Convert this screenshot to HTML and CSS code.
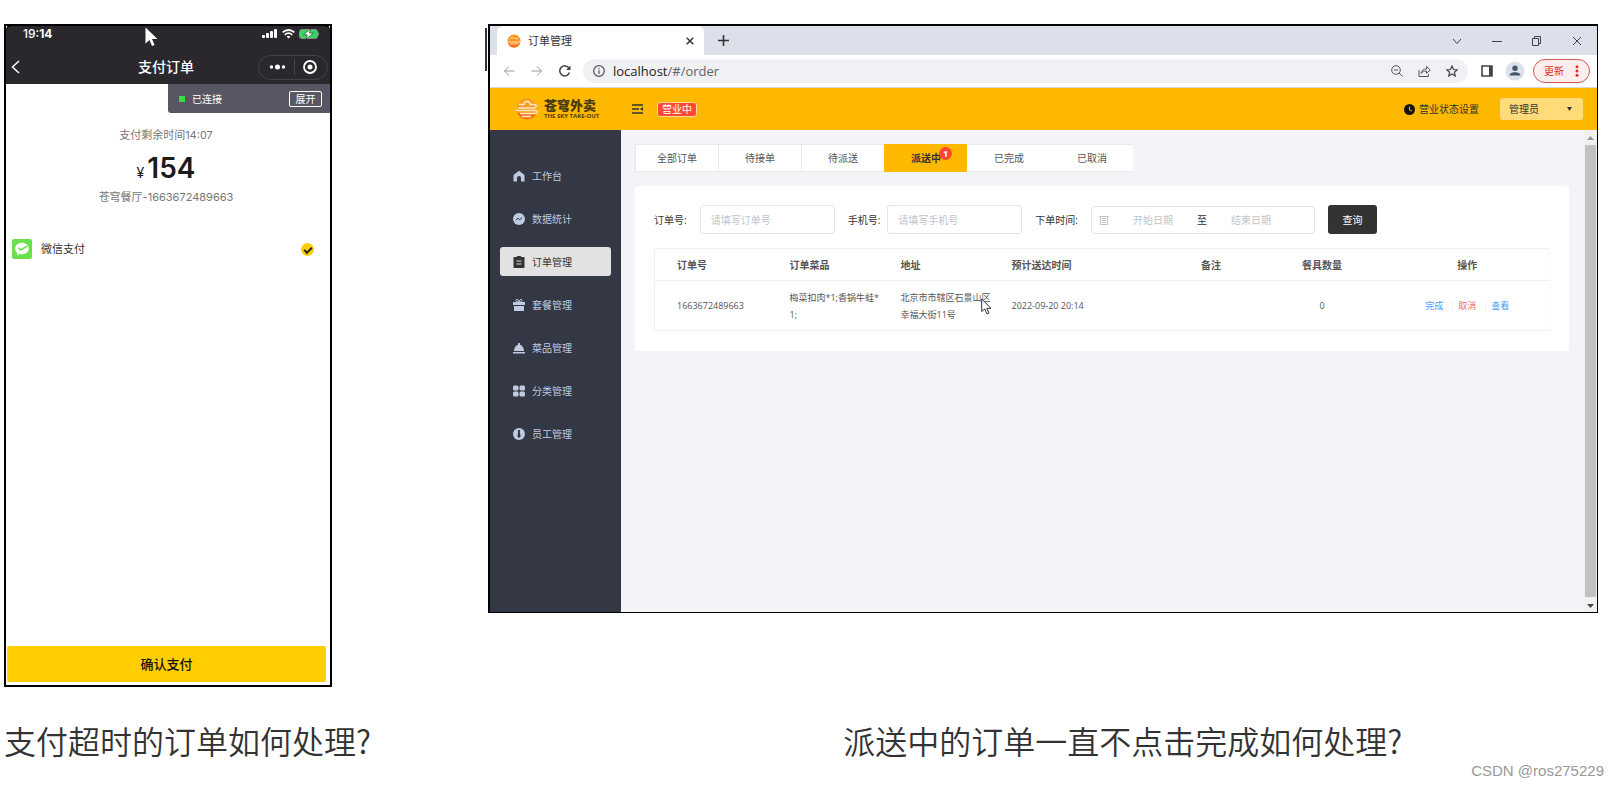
FILE: index.html
```
<!DOCTYPE html>
<html lang="zh-CN">
<head>
    <meta charset="UTF-8">
    <meta name="viewport" content="width=device-width, initial-scale=1.0">
    <title>订单管理</title>
    <link rel="stylesheet" href="styles.css">
</head>
<body>
    <main class="board">
        <!-- Mini program payment page -->
        <section class="phone">
            <div class="phone-top">
                <div class="status-bar">
                    <span class="clock">19:<b>14</b></span>
                    <span class="status-icons">
                        <svg width="16" height="9" viewBox="0 0 16 9" fill="#fff"><rect x="0" y="6" width="3" height="3" rx="1"/><rect x="4" y="4" width="3" height="5" rx="1"/><rect x="8" y="2" width="3" height="7" rx="1"/><rect x="12" y="0" width="3" height="9" rx="1"/></svg>
                        <svg width="13" height="10" viewBox="0 0 13 10" fill="none" stroke="#fff" stroke-width="1.8"><path d="M.7 3.4C4 .2 9 .2 12.300 3.400M2.800 5.800C5 3.800 8 3.800 10.200 5.800"/><path d="M4.600 7.500 6.500 9.600 8.400 7.500C7.300 6.600 5.700 6.600 4.600 7.500z" fill="#fff" stroke="none"/></svg>
                        <svg width="21" height="10" viewBox="0 0 21 10"><rect x=".5" y=".5" width="18" height="9" rx="2.500" fill="#35d65c" stroke="#8d8d90"/><path d="M19.500 3.500v3" stroke="#8d8d90"/><path d="M11.500 0 4.500 5.800h3.800L7 10 14.500 4.100h-4.100z" fill="#fff" stroke="#2a282d" stroke-width=".6"/></svg>
                    </span>
                </div>
                <div class="nav-bar">
                    <button class="back" aria-label="返回"><svg width="9" height="14" viewBox="0 0 9 14" fill="none" stroke="#fff" stroke-width="1.500"><path d="M8 1 1.500 7 8 13"/></svg></button>
                    <h1>支付订单</h1>
                    <div class="capsule">
                        <svg width="17" height="6" viewBox="0 0 17 6" fill="#fff"><circle cx="2.500" cy="3" r="1.700"/><circle cx="8.500" cy="3" r="2.500"/><circle cx="14.500" cy="3" r="1.700"/></svg>
                        <i></i>
                        <svg width="14" height="14" viewBox="0 0 14 14"><circle cx="7" cy="7" r="6" fill="none" stroke="#fff" stroke-width="1.800"/><circle cx="7" cy="7" r="2.500" fill="#fff"/></svg>
                    </div>
                </div>
                <svg class="phone-pointer" width="13" height="20" viewBox="0 0 13 20"><path d="M.5.5v16l4-3.500 2.500 6 2.500-1-2.500-6h5.500z" fill="#fff"/></svg>
            </div>
            <div class="debug-bar">
                <i></i><span>已连接</span><button>展开</button>
            </div>
            <div class="pay-info">
                <p>支付剩余时间14:07</p>
                <p class="amount"><small>¥</small>154</p>
                <p>苍穹餐厅-1663672489663</p>
            </div>
            <label class="pay-method">
                <svg width="20" height="20" viewBox="0 0 20 20"><rect width="20" height="20" rx="2" fill="#6ae04d"/><path d="M10 3.800c4 0 6.800 2.500 6.800 5.700s-2.800 5.800-6.800 5.800c-.8 0-1.700-.1-2.400-.3L5 16.400l.5-2.300c-1.500-1.100-2.300-2.700-2.300-4.600 0-3.200 2.800-5.700 6.800-5.700z" fill="#fff"/><path d="M6.500 8.800 8.700 11 15.500 6.800" fill="none" stroke="#6ae04d" stroke-width="1.500"/></svg>
                <span>微信支付</span>
                <input type="radio" name="pay" checked>
            </label>
            <button class="confirm">确认支付</button>
        </section>

        <!-- Admin page in a browser window -->
        <section class="browser">
            <div class="tab-strip">
                <div class="browser-tab">
                    <svg width="14" height="14" viewBox="0 0 14 14"><circle cx="7" cy="7" r="6.500" fill="#ff9420"/><path d="M1 9.500h12A6.500 6.500 0 0 1 1 9.500z" fill="#ff6b16"/><path d="M3 5.500c0-2 3-2 3.500-1.500s4 0 4.500 1.500M1 8h12M3 10h8" fill="none" stroke="#ffe3b5"/></svg>
                    <span>订单管理</span>
                    <svg width="8" height="8" viewBox="0 0 8 8" stroke="#333" stroke-width="1.500"><path d="m.7.7 6.600 6.600M7.300.7.7 7.300"/></svg>
                </div>
                <svg class="new-tab" width="11" height="11" viewBox="0 0 11 11" stroke="#333" stroke-width="1.600"><path d="M5.500 0v11M0 5.500h11"/></svg>
                <div class="window-controls">
                    <svg width="10" height="10" viewBox="0 0 10 10"><path d="m1 3 4 4.500L9 3"/></svg>
                    <svg width="10" height="10" viewBox="0 0 10 10"><path d="M0 5.500h10"/></svg>
                    <svg width="10" height="10" viewBox="0 0 10 10"><path d="M.5 2.500h6v7h-6zM2.500 2.500v-2h6v7h-2"/></svg>
                    <svg width="10" height="10" viewBox="0 0 10 10"><path d="m1 1 8 8M9 1 1 9"/></svg>
                </div>
            </div>

            <div class="toolbar">
                <svg width="12" height="12" viewBox="0 0 12 12" stroke="#999"><path d="M11.500 6H1.500M6 1.500 1.500 6 6 10.500"/></svg>
                <svg width="12" height="12" viewBox="0 0 12 12" stroke="#999"><path d="M.5 6h10M6 1.500 10.500 6 6 10.500"/></svg>
                <svg width="12" height="12" viewBox="0 0 12 12" stroke="#444" stroke-width="1.500"><path d="M10.500 7.500A5 5 0 1 1 10 3.200"/><path d="M11.500.5v4.500H7z" fill="#444" stroke="none"/></svg>
                <div class="omnibox">
                    <svg width="12" height="12" viewBox="0 0 12 12" stroke="#555" stroke-width="1.200"><circle cx="6" cy="6" r="5.300"/><path d="M6 5.300V9M6 3v1.300"/></svg>
                    <span class="url"><b>localhost</b>/#/order</span>
                    <svg width="12" height="12" viewBox="0 0 12 12" stroke="#555"><circle cx="5" cy="5" r="4.300"/><path d="m8 8 3.500 3.500M3 5h4"/></svg>
                    <svg width="13" height="12" viewBox="0 0 13 12" stroke="#555"><path d="M1 5v6.500h9.500V9M3 8.500c.5-3 2.500-4.500 5.500-4.500V1.500L12.300 5 8.500 8.300V6C6 6 4.500 6.500 3 8.500z"/></svg>
                    <svg width="12" height="12" viewBox="0 0 12 12" stroke="#444" stroke-width="1.200"><path d="M6 1 7.500 4.500l3.800.3-2.900 2.500.9 3.700L6 9l-3.300 2 .9-3.700L.7 4.800l3.800-.3z"/></svg>
                </div>
                <svg width="12" height="12" viewBox="0 0 12 12"><path d="M1 1h10v10H1z" stroke="#444" stroke-width="1.600"/><path d="M8 1h3v10H8z" fill="#444"/></svg>
                <svg width="20" height="20" viewBox="0 0 20 20"><circle cx="10" cy="10" r="9.500" fill="#dce1ea"/><circle cx="10" cy="7.200" r="2.700" fill="#45566b"/><path d="M4.500 14.500c0-4.500 11-4.500 11 0z" fill="#45566b"/></svg>
                <button class="update">更新 <svg width="4" height="12" viewBox="0 0 4 12" fill="#d93025"><circle cx="2" cy="1.800" r="1.500"/><circle cx="2" cy="6" r="1.500"/><circle cx="2" cy="10.200" r="1.500"/></svg></button>
            </div>

            <header class="app-header">
                <div class="brand">
                    <svg width="24" height="22" viewBox="0 0 24 22"><circle cx="12" cy="11" r="10.500" fill="#ff9a1c"/><path d="M2.500 15h19A10.500 10.500 0 0 1 2.500 15z" fill="#ff6a12"/><path d="M4 6.500h5c0-4 6-4 6 0h4c3 0 3 3.500 0 3.500H3M1 11.500c2 2 4 1 6 1h14M5 15.500h15c3 0 3-3 1-3M7 18.500h9" fill="none" stroke="#ffeccb" stroke-width="1.300"/></svg>
                    <div><strong>苍穹外卖</strong><small>THE SKY TAKE-OUT</small></div>
                </div>
                <svg class="fold" width="11" height="10" viewBox="0 0 11 10" stroke="#333" stroke-width="1.400"><path d="M0 1h11M0 5h7M0 9h11"/><path d="m11 3-3 2 3 2z" fill="#333" stroke="none"/></svg>
                <span class="open-tag">营业中</span>
                <button class="shop-state"><svg width="11" height="11" viewBox="0 0 11 11"><circle cx="5.500" cy="5.500" r="5.500" fill="#181408"/><path d="M5.500 2.500v3.500L8 7" fill="none" stroke="#ffb800"/></svg>营业状态设置</button>
                <div class="account">
                    <select aria-label="账号"><option>管理员</option></select>
                    <svg width="5" height="4" viewBox="0 0 5 4"><path d="M0 0h5L2.500 4z" fill="#333"/></svg>
                </div>
            </header>

            <div class="app-body">
                <nav class="sidebar">
                    <a href="#"><svg viewBox="0 0 12 12"><path d="M6 .8 11.500 5v6.500H8V8a2 2 0 0 0-4 0v3.500H.5V5z"/></svg>工作台</a>
                    <a href="#"><svg viewBox="0 0 12 12"><circle cx="6" cy="6" r="6"/><path d="m3 7.300 2-2.300 1.700 1.800L9 4.700" fill="none" stroke="#343744"/></svg>数据统计</a>
                    <a href="#" class="active"><svg viewBox="0 0 12 12"><path d="M.5 1h11v11H.5z"/><path d="M4 0h4v2H4z"/><path d="M3.500 5h5M3.500 8h5" stroke="#e2e2e2"/></svg>订单管理</a>
                    <a href="#"><svg viewBox="0 0 12 12"><path d="M0 3h12v3H0zM1 7h10v5H1z"/><path d="M6 3C2 3 2 .5 4 .5S6 3 6 3s0-2.500 2-2.500S10 3 6 3z" fill="none" stroke="#bfcbe0"/></svg>套餐管理</a>
                    <a href="#"><svg viewBox="0 0 12 12"><path d="M.8 9C1.200 5 3.500 3 5 2.700V1h2v1.700C8.500 3 10.800 5 11.200 9zM0 10h12v1.500H0z"/></svg>菜品管理</a>
                    <a href="#"><svg viewBox="0 0 12 12"><rect y=".5" width="5.500" height="5" rx="1.500"/><rect x="6.500" y=".5" width="5.500" height="5" rx="1.500"/><rect y="6.500" width="5.500" height="5" rx="1.500"/><rect x="6.500" y="6.500" width="5.500" height="5" rx="1.500"/></svg>分类管理</a>
                    <a href="#"><svg viewBox="0 0 12 12"><circle cx="6" cy="6" r="6"/><path d="M4.800 2h2.400L6.800 4l.8 4.500L6 10 4.400 8.500 5.200 4z" fill="#343744"/></svg>员工管理</a>
                </nav>

                <div class="content">
                    <div class="order-tabs">
                        <button>全部订单</button>
                        <button>待接单</button>
                        <button>待派送</button>
                        <button class="active">派送中<span class="badge">1</span></button>
                        <button>已完成</button>
                        <button>已取消</button>
                    </div>

                    <div class="card">
                        <form class="filters">
                            <label for="order-no">订单号:</label>
                            <input id="order-no" class="field" type="text" placeholder="请填写订单号">
                            <label for="phone-no">手机号:</label>
                            <input id="phone-no" class="field" type="text" placeholder="请填写手机号">
                            <label for="date-start">下单时间:</label>
                            <div class="date-range">
                                <svg width="10" height="10" viewBox="0 0 10 10" fill="none" stroke="#c0c4cc"><path d="M1.500 1v8.500h7V1M0 1.500h10M3 3.500h4M3 5.500h4M3 7.500h4"/></svg>
                                <input id="date-start" type="text" placeholder="开始日期">
                                <span>至</span>
                                <input type="text" placeholder="结束日期" aria-label="结束日期">
                            </div>
                            <button type="button" class="search">查询</button>
                        </form>

                        <table>
                            <thead>
                                <tr>
                                    <th class="col-no">订单号</th>
                                    <th class="col-dish">订单菜品</th>
                                    <th class="col-addr">地址</th>
                                    <th class="col-time">预计送达时间</th>
                                    <th class="col-note">备注</th>
                                    <th class="col-count">餐具数量</th>
                                    <th class="col-ops">操作</th>
                                </tr>
                            </thead>
                            <tbody>
                                <tr>
                                    <td class="col-no">1663672489663</td>
                                    <td>梅菜扣肉*1;香锅牛蛙*<br>1;</td>
                                    <td>北京市市辖区石景山区<br>幸福大街11号</td>
                                    <td>2022-09-20 20:14</td>
                                    <td></td>
                                    <td class="col-count">0</td>
                                    <td class="col-ops"><div class="ops"><a href="#">完成</a><a href="#" class="danger">取消</a><a href="#">查看</a></div></td>
                                </tr>
                            </tbody>
                        </table>
                        <svg class="table-pointer" width="11" height="17" viewBox="0 0 11 17"><path d="M.7 1v12.500L3.800 11l2.200 5 2-1-2.200-4.700h4.200z" fill="#fff" stroke="#333"/></svg>
                    </div>
                </div>

                <div class="scrollbar">
                    <svg width="7" height="4" viewBox="0 0 7 4"><path d="M3.500 0 7 4H0z" fill="#999"/></svg>
                    <i></i>
                    <svg width="7" height="4" viewBox="0 0 7 4"><path d="M0 0h7L3.500 4z" fill="#444"/></svg>
                </div>
            </div>
            <span class="caret"></span>
        </section>

        <h2 class="caption">支付超时的订单如何处理?</h2>
        <h2 class="caption caption-right">派送中的订单一直不点击完成如何处理?</h2>
    </main>
    <footer class="watermark">CSDN @ros275229</footer>
</body>
</html>
```
FILE: styles.css
```
:root {
    --yellow: #ffb800;
    --pay-yellow: #ffcd00;
    --dark: #2a282d;
    --sidebar: #343744;
    --sidebar-text: #bfcbe0;
    --line: #f0f1f3;
    --field-line: #e2e4e8;
    --placeholder: #c0c4cc;
}

* {
    margin: 0;
    padding: 0;
    box-sizing: border-box;
}

body {
    background: #fff;
    color: #333;
    font-family: "Open Sans", "Noto Sans CJK SC", sans-serif;
    font-size: 10px;
    line-height: 16px;
}

button,
input,
select {
    font: inherit;
    color: inherit;
    border: none;
    background: none;
}

a {
    color: inherit;
    text-decoration: none;
}

svg {
    display: block;
    flex-shrink: 0;
}

.board {
    display: grid;
    grid-template-columns: minmax(0, 328fr) minmax(0, 1110fr);
    gap: 31px 156px;
    align-items: start;
    padding: 24px 21px 0 4px;
}

/* Phone */
.phone {
    aspect-ratio: 328 / 663;
    display: flex;
    flex-direction: column;
    border: 2px solid #000;
    background: #fff;
    font-family: Inter, "Noto Sans CJK SC", sans-serif;
}

.phone-top {
    position: relative;
    background: var(--dark);
    color: #fff;
    border-radius: 6px 6px 0 0;
    box-shadow: 0 -2px 0 #000;
}

.status-bar {
    display: flex;
    justify-content: space-between;
    padding: 0 10px 0 17px;
    height: 15px;
}

.clock {
    font-size: 12px;
    font-weight: 500;
}

.status-icons {
    display: flex;
    align-items: center;
    gap: 4px;
}

.nav-bar {
    display: grid;
    grid-template-columns: 1fr auto 1fr;
    align-items: center;
    height: 43px;
    padding: 9px 2px 0;
}

.back {
    width: 9px;
    margin-left: 3px;
}

.nav-bar h1 {
    padding-right: 4px;
    font-size: 14px;
    font-weight: 500;
    line-height: 20px;
}

.capsule {
    justify-self: end;
    display: flex;
    align-items: center;
    justify-content: space-between;
    width: 70px;
    height: 25px;
    padding: 0 10px;
    border: 1px solid #444247;
    border-radius: 13px;
}

.capsule i {
    width: 1px;
    height: 16px;
    background: #48464b;
}

.phone-pointer {
    position: absolute;
    left: 43%;
    top: 1px;
}

.debug-bar {
    align-self: flex-end;
    display: flex;
    align-items: center;
    width: 50%;
    height: 29px;
    padding: 0 8px 0 11px;
    background: #595663;
    border-radius: 0 0 0 3px;
    color: #fff;
}

.debug-bar i {
    width: 6px;
    height: 6px;
    margin-right: 7px;
    background: #3ddc3d;
}

.debug-bar button {
    margin-left: auto;
    width: 33px;
    height: 16px;
    border: 1px solid #fff;
    border-radius: 2px;
    line-height: 14px;
}

.pay-info {
    padding: 12px 4px 0 0;
    text-align: center;
    color: #777;
    font-size: 11px;
    line-height: 20px;
}

.pay-info .amount {
    padding-top: 4px;
    color: #1b1b1b;
    font-size: 28px;
    font-weight: 600;
    line-height: 38px;
}

.amount small {
    margin-right: 3px;
    font-size: 14px;
    font-weight: 400;
    line-height: 14px;
}

.pay-method {
    display: flex;
    align-items: center;
    gap: 9px;
    margin-top: 32px;
    padding: 0 16px 0 6px;
    font-size: 11px;
}

.pay-method input {
    appearance: none;
    width: 13px;
    height: 13px;
    margin-left: auto;
    border-radius: 50%;
    background: var(--pay-yellow);
    display: grid;
    place-items: center;
}

.pay-method input::before {
    content: "";
    width: 6px;
    height: 3px;
    border-left: 2px solid #222;
    border-bottom: 2px solid #222;
    transform: rotate(-45deg);
}

.confirm {
    height: 36px;
    margin: auto 4px 3px 1px;
    border-radius: 2px;
    background: var(--pay-yellow);
    color: #111;
    font-size: 13px;
    font-weight: 500;
}

/* Browser window */
.browser {
    position: relative;
    aspect-ratio: 1110 / 589;
    display: flex;
    flex-direction: column;
    border: 2px solid #000;
    border-width: 2px 1px 1px 2px;
}

.caret {
    position: absolute;
    left: -5px;
    top: 2px;
    width: 2px;
    height: 43px;
    background: #333;
}

.tab-strip {
    display: flex;
    align-items: center;
    height: 29px;
    padding-left: 7px;
    background: #dce0ea;
}

.browser-tab {
    display: flex;
    align-items: center;
    gap: 7px;
    width: 207px;
    height: 29px;
    padding: 0 10px;
    border-radius: 6px 6px 0 0;
    background: #fff;
    font-size: 11px;
}

.browser-tab span {
    flex: 1;
}

.new-tab {
    margin-left: 14px;
}

.window-controls {
    display: flex;
    gap: 30px;
    margin-left: auto;
    padding-right: 15px;
}

.window-controls svg {
    fill: none;
    stroke: #444;
}

.toolbar {
    display: flex;
    align-items: center;
    gap: 16px;
    height: 33px;
    padding: 0 7px 0 13px;
    border-bottom: 1px solid #d8d8d8;
}

.toolbar > svg,
.omnibox svg {
    fill: none;
}

.omnibox {
    flex: 1;
    display: flex;
    align-items: center;
    gap: 15px;
    height: 24px;
    padding: 0 10px;
    margin: 0 -3px 0 -4px;
    border-radius: 12px;
    background: #f0f1f4;
}

.url {
    flex: 1;
    margin-left: -7px;
    color: #5f6368;
    font-size: 13px;
}

.url b {
    color: #222;
    font-weight: 400;
}

.toolbar > svg:nth-last-child(2) {
    margin: 0 -8px 0 -4px;
}

.update {
    display: flex;
    align-items: center;
    gap: 11px;
    height: 24px;
    padding: 0 10px;
    border: 1px solid #d05a50;
    border-radius: 12px;
    background: #fdeeee;
    color: #d93025;
}

/* Admin app */
.app-header {
    display: flex;
    align-items: center;
    height: 42px;
    padding-right: 14px;
    background: var(--yellow);
}

.brand {
    display: flex;
    align-items: center;
    gap: 5px;
    width: 142px;
    padding-left: 25px;
    color: #4a3a12;
}

.brand strong {
    display: block;
    font-size: 13px;
    font-weight: 900;
    line-height: 14px;
}

.brand small {
    display: block;
    font-size: 6px;
    font-weight: 700;
    line-height: 8px;
    white-space: nowrap;
}

.open-tag {
    margin-left: 14px;
    padding: 0 4px;
    border: 1px solid #ffd9a0;
    border-radius: 3px;
    background: #ff4931;
    color: #fff;
    line-height: 13px;
}

.shop-state {
    display: flex;
    align-items: center;
    gap: 4px;
    margin-left: auto;
}

.account {
    display: flex;
    align-items: center;
    width: 83px;
    height: 22px;
    margin-left: 21px;
    padding: 0 11px 0 9px;
    border-radius: 3px;
    background: #ffdb7a;
}

.account select {
    flex: 1;
    appearance: none;
}

.app-body {
    flex: 1;
    display: flex;
    background: #f3f4f7;
}

.sidebar {
    display: flex;
    flex-direction: column;
    gap: 14px;
    width: 131px;
    padding: 31px 10px;
    background: var(--sidebar);
    color: var(--sidebar-text);
}

.sidebar a {
    display: flex;
    align-items: center;
    gap: 7px;
    height: 29px;
    padding-left: 13px;
    border-radius: 3px;
}

.sidebar svg {
    width: 12px;
    height: 12px;
    fill: currentColor;
}

.sidebar .active {
    background: #e2e2e2;
    color: #333;
}

.content {
    flex: 1;
    min-width: 0;
    padding: 14px 15px 0 14px;
}

.order-tabs {
    display: flex;
}

.order-tabs button {
    width: 83px;
    height: 28px;
    border: 1px solid #e8e9eb;
    border-width: 1px 0 1px 1px;
    background: #fff;
    color: #555;
}

.order-tabs .active {
    position: relative;
    border-color: var(--yellow);
    background: var(--yellow);
    color: #333;
    font-weight: 700;
}

.order-tabs .active ~ button {
    border-left-color: #fff;
}

.badge {
    position: absolute;
    top: 2px;
    right: 15px;
    width: 13px;
    height: 13px;
    border-radius: 50%;
    background: #ff4433;
    color: #fff;
    font-size: 9px;
    line-height: 13px;
}

.card {
    position: relative;
    margin-top: 14px;
    padding: 19px 19px 20px;
    border-radius: 3px;
    background: #fff;
}

.filters {
    display: flex;
    align-items: center;
    margin-bottom: 14px;
}

.filters label + .field,
.filters .date-range {
    margin: 0 13px;
}

.filters .field {
    width: 135px;
    height: 29px;
    padding: 0 10px;
    border: 1px solid var(--field-line);
    border-radius: 3px;
}

.filters #phone-no {
    margin-left: 7px;
}

.filters ::placeholder {
    color: var(--placeholder);
}

.date-range {
    display: flex;
    align-items: center;
    width: 224px;
    height: 28px;
    padding: 0 7px;
    border: 1px solid var(--field-line);
    border-radius: 3px;
}

.date-range input {
    width: 88px;
    text-align: center;
}

.search {
    width: 49px;
    height: 29px;
    border-radius: 3px;
    background: #333;
    color: #fff;
}

table {
    width: 100%;
    table-layout: fixed;
    border-collapse: collapse;
    border: 1px solid var(--line);
    border-right-color: #fafafa;
    color: #555;
}

th,
td {
    padding: 0 10px;
    border-bottom: 1px solid var(--line);
    text-align: left;
    white-space: nowrap;
}

th {
    height: 32px;
    font-weight: 700;
}

td {
    height: 50px;
    font-size: 9px;
    line-height: 17px;
}

.col-no {
    width: 125px;
    padding-left: 22px;
}

.col-dish,
.col-addr,
.col-note,
.col-count {
    width: 111px;
}

.col-time {
    width: 154px;
}

th.col-note,
.col-count,
.col-ops {
    text-align: center;
}

.col-ops {
    padding-left: 18px;
}

.ops {
    display: flex;
    justify-content: center;
    padding-left: 9px;
    color: #409eff;
}

.ops a {
    padding-right: 9px;
    line-height: 10px;
}

.ops a + a {
    padding-left: 5px;
    border-left: 1px solid var(--line);
}

.ops .danger {
    color: #f56c6c;
}

.table-pointer {
    position: absolute;
    left: 37%;
    top: 112px;
}

.scrollbar {
    display: flex;
    flex-direction: column;
    align-items: center;
    gap: 5px;
    width: 13px;
    padding: 6px 0 4px;
    background: #f1f1f1;
}

.scrollbar i {
    flex: 1;
    width: 11px;
    margin-bottom: 2px;
    background: #c1c1c1;
}

/* Captions */
.caption {
    font-family: "Noto Sans CJK SC", sans-serif;
    font-size: 32px;
    font-weight: 350;
    line-height: 44px;
    white-space: nowrap;
}

.caption-right {
    padding-left: 32%;
}

.watermark {
    padding-right: 15px;
    color: #999;
    font-family: "Liberation Sans", sans-serif;
    font-size: 15px;
    line-height: 18px;
    text-align: right;
}
```
